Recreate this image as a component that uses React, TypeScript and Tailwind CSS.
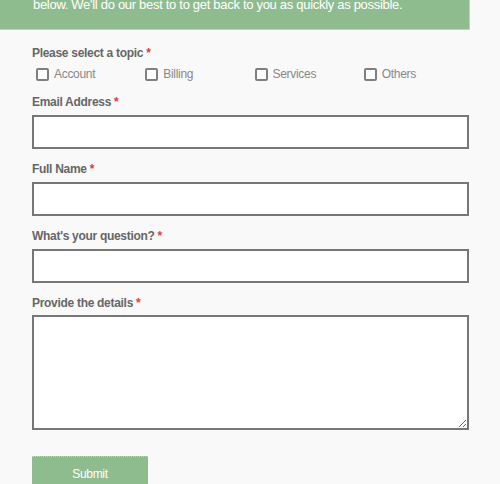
const topics = ["Account", "Billing", "Services", "Others"];

function Label({ text }: { text: string }) {
  return (
    <label className="block text-[12px] leading-[16px] font-bold text-[#666666]">
      {text} <span className="text-[#e53935]">*</span>
    </label>
  );
}

function TextField() {
  return (
    <input
      type="text"
      className="block w-full h-[34px] mt-[5px] bg-white border-2 border-[#777777] outline-none"
    />
  );
}

export default function App() {
  return (
    <div className="min-h-[484px] bg-[#f9f9f9] font-['Liberation_Sans',Arial,sans-serif] tracking-[-0.3px] overflow-hidden">
      <div className="w-[470px]">
        <div className="-mt-[5px] pb-[14px] pl-[33px] bg-[#8fbc8f] border-r border-b border-[#b9d8b9] text-[13px] leading-[20px] text-white whitespace-nowrap">
          below. We'll do our best to to get back to you as quickly as possible.
        </div>

        <form className="pl-[32px] pr-[1px] pt-[15px]">
          <Label text="Please select a topic" />
          <div className="grid grid-cols-4 mt-[6px] h-[15px]">
            {topics.map((t) => (
              <label key={t} className="flex items-center pl-[4px] text-[12px] leading-[15px] text-[#888888]">
                <span className="w-[13px] h-[13px] border-2 border-[#808080] rounded-[2px] bg-white mr-[5px]" />
                {t}
              </label>
            ))}
          </div>

          <div className="mt-[12px]">
            <Label text="Email Address" />
            <TextField />
          </div>

          <div className="mt-[12px]">
            <Label text="Full Name" />
            <TextField />
          </div>

          <div className="mt-[12px]">
            <Label text="What's your question?" />
            <TextField />
          </div>

          <div className="mt-[12px]">
            <Label text="Provide the details" />
            <textarea className="block w-full h-[115px] mt-[4px] bg-white border-2 border-[#777777] outline-none resize-y" />
          </div>

          <button
            type="button"
            className="mt-[26px] w-[116px] h-[34px] bg-[#8fbc8f] text-white text-[12px] border-t border-dotted border-[#b9d8b9]"
          >
            Submit
          </button>
        </form>
      </div>
    </div>
  );
}
